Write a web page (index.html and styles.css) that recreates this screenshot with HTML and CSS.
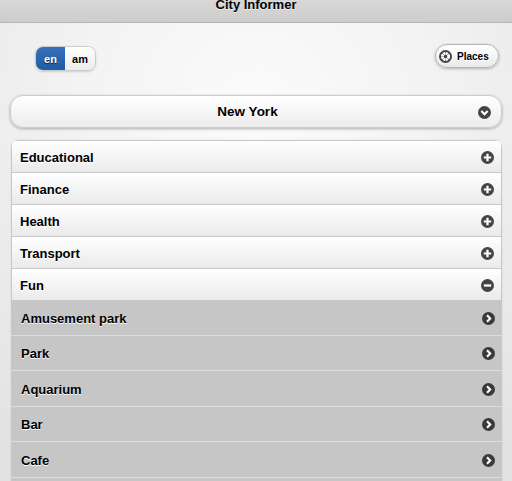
FILE: index.html
```html
<!DOCTYPE html>
<html lang="en">
<head>
<meta charset="utf-8">
<title>City Informer</title>
<link rel="stylesheet" href="styles.css">
</head>
<body>
<svg class="defs" width="0" height="0" aria-hidden="true">
  <symbol id="i-plus" viewBox="0 0 14 14"><circle cx="7" cy="7" r="7" fill="#444"/><path d="M7 3v8M3 7h8" stroke="#fff" stroke-width="2.4"/></symbol>
  <symbol id="i-minus" viewBox="0 0 14 14"><circle cx="7" cy="7" r="7" fill="#444"/><path d="M3 7h8" stroke="#fff" stroke-width="2.4"/></symbol>
  <symbol id="i-right" viewBox="0 0 14 14"><circle cx="7" cy="7" r="7" fill="#3a3a3a"/><path d="M5.4 3.6 8.8 7l-3.4 3.4" fill="none" stroke="#fff" stroke-width="2.3"/></symbol>
  <symbol id="i-down" viewBox="0 0 14 14"><circle cx="7" cy="7" r="7" fill="#444"/><path d="M3.6 5.4 7 8.8l3.4-3.4" fill="none" stroke="#fff" stroke-width="2.3"/></symbol>
  <symbol id="i-gear" viewBox="0 0 14 14"><circle cx="7" cy="7" r="7" fill="#444"/><circle cx="7" cy="7" r="3.4" fill="none" stroke="#fff" stroke-width="3" stroke-dasharray="2.2 .47"/><circle cx="7" cy="7" r="1.2" fill="#444"/></symbol>
</svg>
<header class="bar"><h1 class="title">City Informer</h1></header>
<main class="page">
  <div class="controls">
    <div class="lang">
      <span class="lang-btn active">en</span>
      <span class="lang-btn">am</span>
    </div>
    <a class="places"><svg class="icon"><use href="#i-gear"/></svg>Places</a>
  </div>
  <div class="select">
    <span class="select-text">New York</span>
    <svg class="icon"><use href="#i-down"/></svg>
  </div>
  <ul class="list">
    <li class="item"><span>Educational</span><svg class="icon"><use href="#i-plus"/></svg></li>
    <li class="item"><span>Finance</span><svg class="icon"><use href="#i-plus"/></svg></li>
    <li class="item"><span>Health</span><svg class="icon"><use href="#i-plus"/></svg></li>
    <li class="item"><span>Transport</span><svg class="icon"><use href="#i-plus"/></svg></li>
    <li class="item open"><span>Fun</span><svg class="icon"><use href="#i-minus"/></svg></li>
    <li class="sub"><span>Amusement park</span><svg class="icon"><use href="#i-right"/></svg></li>
    <li class="sub"><span>Park</span><svg class="icon"><use href="#i-right"/></svg></li>
    <li class="sub"><span>Aquarium</span><svg class="icon"><use href="#i-right"/></svg></li>
    <li class="sub"><span>Bar</span><svg class="icon"><use href="#i-right"/></svg></li>
    <li class="sub"><span>Cafe</span><svg class="icon"><use href="#i-right"/></svg></li>
    <li class="sub sub-empty"></li>
  </ul>
</main>
</body>
</html>
```
FILE: styles.css
```css
* { box-sizing: border-box; }
html, body { margin: 0; height: 100%; }
body {
  width: 512px;
  height: 481px;
  overflow: hidden;
  font-family: "Liberation Sans", Arial, sans-serif;
  font-weight: 700;
  color: #000;
  background: radial-gradient(circle at 50% 110px, #fbfbfb 0, #f3f3f3 180px, #e2e2e2 420px);
}
.defs { position: absolute; }
.bar {
  height: 23px;
  background: linear-gradient(#d8d8d8, #cdcdcd);
  border-bottom: 1px solid #b4b4b4;
  overflow: hidden;
}
.title {
  margin: -3px 0 0;
  font-size: 13px;
  line-height: 16px;
  text-align: center;
  color: #000;
  text-shadow: 0 1px 0 #eee;
}
.page { padding: 0 10px 0 11px; }
.controls {
  display: flex;
  justify-content: space-between;
  align-items: flex-start;
  padding: 20px 3px 0 24px;
  height: 72px;
}
.lang {
  display: flex;
  margin-top: 3px;
  height: 25px;
  width: 61px;
  border-radius: 8px;
  border: 1px solid #ccc;
  overflow: hidden;
  box-shadow: 0 1px 2px rgba(0,0,0,.15);
}
.lang-btn {
  flex: 1;
  font-size: 11px;
  line-height: 25px;
  text-align: center;
  background: linear-gradient(#fff, #ececec);
  text-shadow: 0 1px 0 #fff;
}
.lang-btn.active {
  flex: 0 0 29px;
  background: linear-gradient(#396fb8, #1d5ca8);
  color: #fff;
  text-shadow: 0 1px 1px #123;
}
.places {
  display: flex;
  align-items: center;
  gap: 5px;
  height: 24px;
  width: 64px;
  padding-left: 3px;
  margin-top: 1px;
  font-size: 10px;
  border: 1px solid #b5b5b5;
  border-radius: 12px;
  background: linear-gradient(#fff, #eaeaea);
  box-shadow: 0 1px 3px rgba(0,0,0,.25);
  text-shadow: 0 1px 0 #fff;
}
.icon { width: 13px; height: 13px; flex: none; }
.select {
  position: relative;
  height: 33px;
  margin-left: -1px;
  margin-bottom: 12px;
  padding-right: 17px;
  display: flex;
  align-items: center;
  justify-content: center;
  font-size: 13.5px;
  border: 1px solid #ccc;
  border-radius: 13px;
  background: linear-gradient(#fff, #ececec);
  box-shadow: 0 1px 3px rgba(0,0,0,.3);
  text-shadow: 0 1px 0 #fff;
}
.select .icon { position: absolute; right: 10px; top: 9.5px; }
.list {
  list-style: none;
  margin: 0;
  padding: 0;
  border-radius: 8px 8px 0 0;
  overflow: hidden;
  box-shadow: 0 0 2px rgba(0,0,0,.1);
}
.item, .sub {
  display: flex;
  align-items: center;
  justify-content: space-between;
  font-size: 13px;
  text-shadow: 0 1px 0 #fff;
}
.item {
  height: 32px;
  padding: 2px 7px 0 8px;
  border: 1px solid #c8c8c8;
  border-bottom: 0;
  background: linear-gradient(#fff, #eaeaea);
}
.sub {
  height: 35.5px;
  padding: 2px 7px 0 10px;
  background: #c6c6c6;
  border-bottom: 1px solid;
  border-image: linear-gradient(90deg, #fff 1px, #dcdcdc 1px, #dcdcdc calc(100% - 1px), #fff calc(100% - 1px)) 1;
}
```
